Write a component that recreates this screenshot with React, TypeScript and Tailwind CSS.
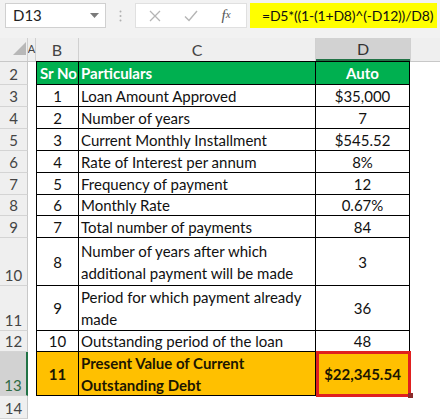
import React from "react";

type Row = {
  n: number;
  h: number;
  b: string;
  c: React.ReactNode;
  d: string;
};

const rows: Row[] = [
  { n: 3, h: 22, b: "1", c: "Loan Amount Approved", d: "$35,000" },
  { n: 4, h: 22, b: "2", c: "Number of years", d: "7" },
  { n: 5, h: 22, b: "3", c: "Current Monthly Installment", d: "$545.52" },
  { n: 6, h: 22, b: "4", c: "Rate of Interest per annum", d: "8%" },
  { n: 7, h: 22, b: "5", c: "Frequency of payment", d: "12" },
  { n: 8, h: 21, b: "6", c: "Monthly Rate", d: "0.67%" },
  { n: 9, h: 22, b: "7", c: "Total number of payments", d: "84" },
  {
    n: 10,
    h: 48,
    b: "8",
    c: (
      <>
        Number of years after which
        <br />
        additional payment will be made
      </>
    ),
    d: "3",
  },
  {
    n: 11,
    h: 45,
    b: "9",
    c: (
      <>
        Period for which payment already
        <br />
        made
      </>
    ),
    d: "36",
  },
  { n: 12, h: 21, b: "10", c: "Outstanding period of the loan", d: "48" },
];

function RowHead({ n, h, selected }: { n: number; h: number; selected?: boolean }) {
  return (
    <div
      className={
        "w-[28px] shrink-0 flex items-end justify-center border-b border-[#d4d4d4] pb-[1px] text-[15px] leading-[18px] " +
        (selected
          ? "bg-[#d2d2d2] text-[#2f6b45] border-r-2 border-r-[#217346]"
          : "bg-[#efefef] text-[#444] border-r border-r-[#c8c8c8]")
      }
      style={{ height: h }}
    >
      {n}
    </div>
  );
}

export default function App() {
  return (
    <div
      className="w-[440px] h-[420px] overflow-hidden bg-white relative"
      style={{ fontFamily: "Lato, 'Open Sans', sans-serif" }}
    >
      {/* formula bar */}
      <div className="h-[38px] bg-[#f2f2f2] flex items-start pt-[3px] pl-[5px]">
        <div className="w-[101px] h-[25px] bg-white border border-[#d0d0d0] flex items-center justify-between pl-[7px] pr-[6px] text-[15px] text-[#222]">
          <span>D13</span>
          <svg width="9" height="6" viewBox="0 0 9 6">
            <path d="M0 0 L9 0 L4.5 5 Z" fill="#7a7a7a" />
          </svg>
        </div>
        <div className="w-[29px] h-[25px] flex items-center justify-center">
          <svg width="3" height="12" viewBox="0 0 3 12">
            <circle cx="1.5" cy="1.5" r="1" fill="#b0b0b0" />
            <circle cx="1.5" cy="6" r="1" fill="#b0b0b0" />
            <circle cx="1.5" cy="10.5" r="1" fill="#b0b0b0" />
          </svg>
        </div>
        <div className="w-[112px] h-[25px] bg-white border border-[#e0e0e0] flex items-center">
          <div className="w-[38px] flex justify-center">
            <svg width="12" height="12" viewBox="0 0 12 12">
              <path d="M1 1 L11 11 M11 1 L1 11" stroke="#b5b5b5" strokeWidth="1.3" />
            </svg>
          </div>
          <div className="w-[34px] flex justify-center">
            <svg width="14" height="12" viewBox="0 0 14 12">
              <path d="M1 6.5 L5 10.5 L13 1" stroke="#b5b5b5" strokeWidth="1.4" fill="none" />
            </svg>
          </div>
          <div
            className="w-[36px] flex justify-center text-[15px] italic text-[#555]"
            style={{ fontFamily: "'Liberation Serif', serif" }}
          >
            f<span className="text-[11px] relative top-[2px]">x</span>
          </div>
        </div>
        <div className="ml-[3px] w-[187px] h-[25px] bg-[#ffff00] flex items-center pl-[12px] text-[14px] tracking-[-0.2px] text-[#111] whitespace-nowrap">
          =D5*((1-(1+D8)^(-D12))/D8)
        </div>
      </div>

      {/* column headers */}
      <div className="flex h-[24px] bg-[#efefef] border-b border-[#c8c8c8] text-[16px] text-[#444]">
        <div className="w-[28px] shrink-0 relative border-r border-[#d0d0d0]">
          <svg className="absolute left-[13px] top-[4px]" width="13" height="14" viewBox="0 0 13 14">
            <path d="M13 0 L13 13 L0 13 Z" fill="#b8b8b8" />
          </svg>
        </div>
        <div className="w-[8px] shrink-0 border-r border-[#d0d0d0] flex items-center justify-center">
          <span className="text-[11px]">A</span>
        </div>
        <div className="w-[43px] shrink-0 border-r border-[#d0d0d0] flex items-center justify-center">B</div>
        <div className="w-[237px] shrink-0 border-r border-[#d0d0d0] flex items-center justify-center">C</div>
        <div className="w-[94px] shrink-0 bg-[#d2d2d2] border-b-2 border-[#217346] flex items-center justify-center text-[#333]">
          D
        </div>
        <div className="flex-1 border-l border-[#d0d0d0]" />
      </div>

      {/* header row 2 */}
      <div className="flex">
        <RowHead n={2} h={23} />
        <div className="w-[8px] shrink-0" />
        <div className="flex border-t border-l border-black bg-[#00b050] text-white font-bold text-[15px] h-[24px] -mt-px">
          <div className="w-[42px] border-r border-b border-black flex items-center pl-[3px]">Sr No</div>
          <div className="w-[237px] border-r border-b border-black flex items-center pl-[2px]">Particulars</div>
          <div className="w-[94px] border-r border-b border-black flex items-center justify-center">Auto</div>
        </div>
      </div>

      {rows.map((r) => (
        <div key={r.n} className="flex">
          <RowHead n={r.n} h={r.h} />
          <div className="w-[8px] shrink-0" />
          <div className="flex border-l border-black text-[15px] text-[#111] leading-[22px]" style={{ height: r.h }}>
            <div className="w-[42px] border-r border-b border-black flex items-center justify-center">{r.b}</div>
            <div className="w-[237px] border-r border-b border-black flex items-center pl-[2px]">
              <div>{r.c}</div>
            </div>
            <div className="w-[94px] border-r border-b border-black flex items-center justify-center">{r.d}</div>
          </div>
        </div>
      ))}

      {/* row 13 */}
      <div className="flex">
        <RowHead n={13} h={44} selected />
        <div className="w-[8px] shrink-0" />
        <div className="flex border-l border-black bg-[#ffc000] text-[15px] font-bold text-[#1c1600] leading-[22px] h-[44px] relative">
          <div className="w-[42px] border-r border-b border-black flex items-center justify-center">11</div>
          <div className="w-[237px] border-r border-b border-black flex items-center pl-[2px]">
            <div>
              Present Value of Current
              <br />
              Outstanding Debt
            </div>
          </div>
          <div className="w-[94px] border-r border-b border-black flex items-center justify-center">$22,345.54</div>
          <div className="absolute left-[279px] top-[-1px] w-[95px] h-[46px] border-[3px] border-[#e0201f]" />
          <div className="absolute left-[371px] top-[41px] w-[5px] h-[5px] bg-[#8a2b2b]" />
        </div>
      </div>

      {/* row 14 */}
      <div className="flex">
        <RowHead n={14} h={23} />
      </div>
    </div>
  );
}
